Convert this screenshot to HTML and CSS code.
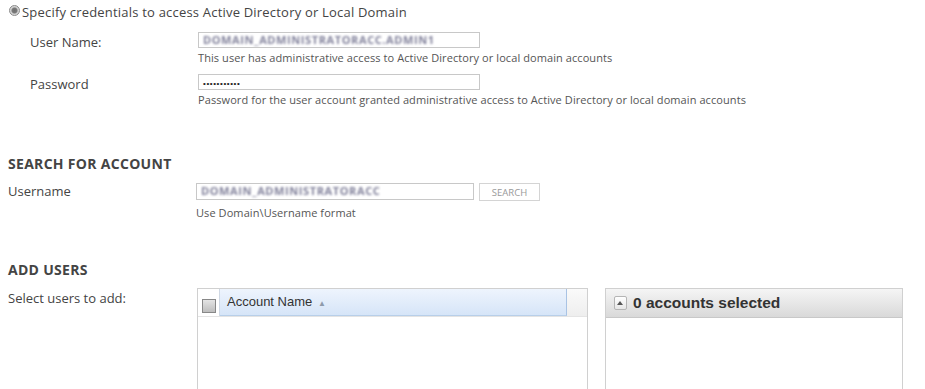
FILE: index.html
```html
<!DOCTYPE html>
<html lang="en">

<head>
    <meta charset="UTF-8">
    <title>Add Users</title>
    <link rel="stylesheet" href="styles.css">
</head>

<body>
    <div class="radio-line">
        <span class="radio"></span>
        <span>Specify credentials to access Active Directory or Local Domain</span>
    </div>

    <div class="cred-fields">
        <div class="field-row">
            <label class="cred-label">User Name:</label>
            <div>
                <div class="text-box cred-box"><span class="masked">DOMAIN_ADMINISTRATORACC.ADMIN1</span></div>
                <div class="help">This user has administrative access to Active Directory or local domain accounts</div>
            </div>
        </div>
        <div class="field-row second">
            <label class="cred-label">Password</label>
            <div>
                <div class="text-box cred-box"><span class="dots">•••••••••••</span></div>
                <div class="help">Password for the user account granted administrative access to Active Directory or local domain accounts</div>
            </div>
        </div>
    </div>

    <h3 class="section-title search-title">SEARCH FOR ACCOUNT</h3>
    <div class="field-row">
        <label class="wide-label">Username</label>
        <div>
            <div class="search-line">
                <div class="text-box search-box"><span class="masked">DOMAIN_ADMINISTRATORACC</span></div>
                <button class="search-btn" type="button">SEARCH</button>
            </div>
            <div class="help">Use Domain\Username format</div>
        </div>
    </div>

    <h3 class="section-title add-title">ADD USERS</h3>
    <div class="field-row">
        <label class="wide-label add-label">Select users to add:</label>
        <div class="grid">
            <div class="grid-head">
                <div class="check-cell"><span class="check"></span></div>
                <div class="name-col">Account Name <span class="sort">&#9650;</span></div>
                <div class="spare-col"></div>
            </div>
        </div>
        <div class="picked">
            <div class="picked-head">
                <span class="toggle"></span>
                <span>0 accounts selected</span>
            </div>
        </div>
    </div>
</body>

</html>
```

FILE: styles.css
```css
body {
    margin: 0;
    padding: 4px 0 0 8px;
    font-family: "Open Sans", "Liberation Sans", sans-serif;
    font-size: 13px;
    line-height: 16px;
    color: #444;
    background-color: #fff;
}

.radio-line {
    display: flex;
    align-items: center;
    gap: 2px;
    height: 16px;
    letter-spacing: 0.2px;
}

.radio {
    display: inline-block;
    box-sizing: border-box;
    width: 11px;
    height: 11px;
    border: 1px solid #8a8a8a;
    border-radius: 50%;
    background: radial-gradient(circle, #6e6e6e 0, #7a7a7a 2.5px, #cfcfcf 3.5px, #e8e8e8 100%);
    margin: -3px 0 0 1px;
}

.cred-fields {
    margin: 12px 0 0 22px;
}

.field-row {
    display: flex;
    align-items: flex-start;
}

.field-row.second {
    margin-top: 9px;
}

.cred-label {
    width: 168px;
    padding-top: 2px;
}

.wide-label {
    width: 188px;
    padding-top: 0;
}

.text-box {
    box-sizing: border-box;
    height: 16px;
    border: 1px solid #c8c8c8;
    padding: 0 4px;
    line-height: 13px;
    overflow: hidden;
    white-space: nowrap;
    background-color: #fff;
}

.cred-box {
    width: 282px;
}

.search-box {
    width: 278px;
    height: 17px;
}

.masked {
    font-size: 11px;
    font-weight: bold;
    color: #80809a;
    letter-spacing: 0.6px;
    filter: blur(1.3px);
}

.dots {
    font-family: "Liberation Sans", sans-serif;
    font-size: 8px;
    letter-spacing: 0.6px;
    color: #222;
}

.help {
    margin-top: 3px;
    font-size: 11px;
    line-height: 14px;
    letter-spacing: 0.08px;
    color: #555;
}

.section-title {
    margin: 0;
    font-size: 14px;
    line-height: 18px;
    font-weight: bold;
    letter-spacing: 0.3px;
    color: #444;
}

.search-title {
    margin-top: 48px;
    margin-bottom: 10px;
}

.search-line {
    display: flex;
    gap: 5px;
}

.search-btn {
    box-sizing: border-box;
    width: 61px;
    height: 18px;
    padding: 0;
    border: 1px solid #d4d4d4;
    background-color: #fff;
    font-family: "Open Sans", "Liberation Sans", sans-serif;
    font-size: 9.5px;
    color: #999;
    cursor: pointer;
}

.search-line + .help {
    margin-top: 5px;
}

.add-title {
    margin-top: 41px;
    margin-bottom: 9px;
}

.add-label {
    width: 189px;
    padding-top: 2px;
}

.grid {
    box-sizing: border-box;
    width: 391px;
    height: 110px;
    border: 1px solid #d0d0d0;
    border-bottom: none;
}

.grid-head {
    display: flex;
    height: 27px;
    border-bottom: 1px solid #e4e4e4;
}

.check-cell {
    width: 22px;
    display: flex;
    justify-content: center;
    padding-top: 10px;
    box-sizing: border-box;
    border-right: 1px solid #cfd8e4;
}

.check {
    display: block;
    width: 12px;
    height: 12px;
    border: 1px solid #888;
    background: linear-gradient(#e4e4e4, #bdbdbd);
}

.name-col {
    width: 347px;
    box-sizing: border-box;
    padding: 5px 0 0 7px;
    background: linear-gradient(#eef4fd, #d6e5f8);
    border-right: 1px solid #a9c3e4;
    border-bottom: 1px solid #b8cfe9;
    font-family: "Liberation Sans", Arial, sans-serif;
    font-size: 13px;
    color: #333;
}

.sort {
    font-size: 8px;
    color: #8e9bab;
    margin-left: 2px;
}

.spare-col {
    flex: 1;
    background: linear-gradient(#fafafa, #eeeeee);
}

.picked {
    box-sizing: border-box;
    width: 298px;
    height: 110px;
    margin-left: 17px;
    border: 1px solid #d0d0d0;
    border-bottom: none;
}

.picked-head {
    display: flex;
    align-items: center;
    gap: 6px;
    height: 28px;
    padding-left: 8px;
    background: linear-gradient(#f5f5f5, #d9d9d9);
    border-bottom: 1px solid #c8c8c8;
    font-family: "Liberation Sans", Arial, sans-serif;
    font-size: 15.5px;
    font-weight: bold;
    color: #333;
}

.toggle {
    position: relative;
    box-sizing: border-box;
    width: 13px;
    height: 14px;
    border: 1px solid #b5b5b5;
    border-radius: 2px;
    background: linear-gradient(#fff, #e6e6e6);
}

.toggle::after {
    content: "";
    position: absolute;
    left: 2px;
    top: 4px;
    border-left: 3.5px solid transparent;
    border-right: 3.5px solid transparent;
    border-bottom: 4px solid #555;
}
```
